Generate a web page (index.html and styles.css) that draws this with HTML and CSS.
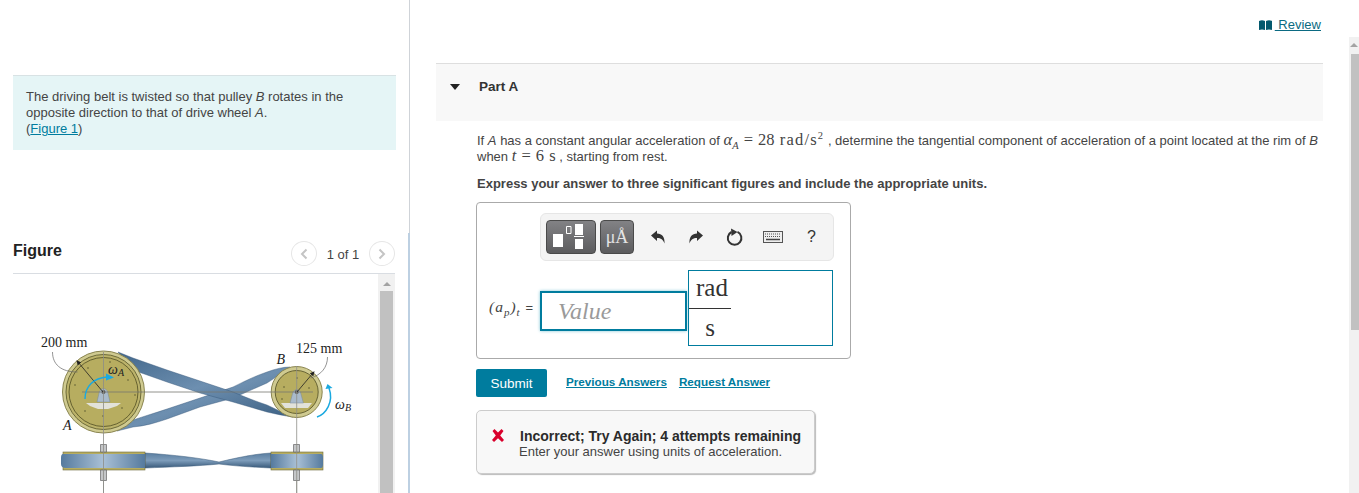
FILE: index.html
```html
<!DOCTYPE html>
<html lang="en">
<head>
<meta charset="utf-8">
<title>Part A</title>
<link rel="stylesheet" href="styles.css">
</head>
<body>
<div class="page">
  <aside class="left">
    <div class="intro">
      <p>The driving belt is twisted so that pulley <i>B</i> rotates in the<br>opposite direction to that of drive wheel <i>A</i>.<br>(<a href="#">Figure 1</a>)</p>
    </div>
    <div class="fig-head">
      <h2>Figure</h2>
      <div class="pager">
        <span class="circle"><svg width="10" height="12" viewBox="0 0 10 12"><path d="M7.500 1.500 3 6l4.500 4.500" fill="none" stroke="#c4c4c4" stroke-width="2"/></svg></span>
        <span class="pager-text">1 of 1</span>
        <span class="circle"><svg width="10" height="12" viewBox="0 0 10 12"><path d="M2.500 1.500 7 6l-4.500 4.500" fill="none" stroke="#c4c4c4" stroke-width="2"/></svg></span>
      </div>
    </div>
    <div class="fig-scroll">
      <svg class="figure" width="365" height="219" viewBox="13 274 365 219">
        <defs>
          <linearGradient id="belt" x1="0" y1="0" x2="0" y2="1"><stop offset="0" stop-color="#5a7ea1"/><stop offset=".5" stop-color="#7d9cba"/><stop offset="1" stop-color="#38597a"/></linearGradient>
          <linearGradient id="beltH" x1="0" y1="0" x2="1" y2="0"><stop offset="0" stop-color="#557a9e"/><stop offset=".5" stop-color="#a9c0d6"/><stop offset="1" stop-color="#557a9e"/></linearGradient>
          <linearGradient id="beltA" x1="0" y1="0" x2="1" y2="1"><stop offset="0" stop-color="#42678b"/><stop offset=".5" stop-color="#6d8fb0"/><stop offset="1" stop-color="#3d6184"/></linearGradient>
          <marker id="tip" markerWidth="6" markerHeight="6" refX="3" refY="3" orient="auto"><path d="M0 0 6 3 0 6z" fill="#222"/></marker>
        </defs>
        <!-- crossing belts -->
        <path d="M117 431C122 427 128 423 133 420C145 416 155 413 167 409L200 398 233 387C245 381 255 376 267 372C275 369 283 367 290 367C283 372 275 378 267 383L233 398 200 407 167 419C155 423 145 426 133 427Z" fill="url(#beltA)" stroke="#2f5273" stroke-width=".4"/>
        <path d="M118 352 133 358 167 370 200 381 233 392C245 397 255 401 267 405C276 409 285 414 293 417C285 416 276 414 267 412L233 402 200 393 167 382 133 370C128 364 123 358 118 352Z" fill="url(#beltA)" stroke="#2f5273" stroke-width=".4"/>
        <!-- pulley A -->
        <circle cx="103.500" cy="392" r="41" fill="#cfca90" stroke="#8a8550"/>
        <circle cx="103.500" cy="392" r="37.500" fill="#bcb36a" stroke="#6d6a38"/>
        <circle cx="103.500" cy="392" r="34.500" fill="#b7ad60" stroke="#4f4c22" stroke-width=".8"/>
        <g fill="#5f5c30">
          <circle cx="75" cy="385" r=".8"/><circle cx="110" cy="362" r=".8"/><circle cx="128" cy="380" r=".8"/><circle cx="135" cy="395" r=".8"/><circle cx="85" cy="411" r=".8"/><circle cx="122" cy="408" r=".8"/><circle cx="103" cy="416" r=".8"/><circle cx="88" cy="368" r=".8"/>
        </g>
        <path d="M86 403H121L117 406 108 409H98L90 406Z" fill="#e2e2da"/>
        <path d="M97 402l2.500-11q4-5 8 0l2.500 11z" fill="#a9bacb" stroke="#7b8a99" stroke-width=".5"/>
        <circle cx="103.500" cy="392" r="2" fill="#555"/>
        <!-- pulley B -->
        <circle cx="296.700" cy="392" r="25.500" fill="#cfca90" stroke="#8a8550"/>
        <circle cx="296.700" cy="392" r="21.500" fill="#b7ad60" stroke="#4f4c22" stroke-width=".8"/>
        <g fill="#5f5c30"><circle cx="284" cy="387" r=".8"/><circle cx="309" cy="388" r=".8"/><circle cx="282" cy="399" r=".8"/><circle cx="297" cy="378" r=".8"/></g>
        <path d="M281 403H312L308 408H285Z" fill="#e2e2da"/>
        <path d="M290 403l3-11q3.700-5 7.400 0l3 11z" fill="#a9bacb" stroke="#7b8a99" stroke-width=".5"/>
        <circle cx="296.700" cy="392" r="2" fill="#555"/>
        <!-- centre lines -->
        <path d="M82 392H313" stroke="#77776f" stroke-width=".8"/>
        <path d="M103.500 352V493M296.700 366V493" stroke="#8d8d88" stroke-width=".8"/>
        <!-- leaders -->
        <path d="M52.500 352c0 12 8 20 25 20" fill="none" stroke="#666" stroke-width=".7"/>
        <path d="M103 392 78 362" stroke="#222" stroke-width=".8" marker-end="url(#tip)"/>
        <path d="M327.500 357c0 10-6 18-17 21" fill="none" stroke="#666" stroke-width=".7"/>
        <path d="M297 392 313 373" stroke="#222" stroke-width=".8" marker-end="url(#tip)"/>
        <!-- side view -->
        <path d="M145 453C175 455 200 458 219 462C240 457 255 454 271 453V468C250 467 235 466 219 464C200 466 170 467 145 468Z" fill="url(#belt)" stroke="#3a5a7a" stroke-width=".5"/>
        <rect x="63" y="452" width="82" height="18" fill="#b7ad60" stroke="#6d6a3c" stroke-width=".6"/>
        <rect x="271" y="452" width="52" height="18" fill="#b7ad60" stroke="#6d6a3c" stroke-width=".6"/>
        <path d="M63 454H145V468H66Q61 468 61 464V458Q61 454 63 454Z" fill="url(#beltH)"/>
        <path d="M271 454H321Q323 454 323 458V464Q323 468 321 468H271Z" fill="url(#beltH)"/>
        <path d="M100.500 444.500h6v7.500h-6zM100.500 470h6v10.500h-6zM293.500 444.500h6v7.500h-6zM293.500 470h6v10.500h-6z" fill="#c4c6c8" stroke="#666" stroke-width=".7"/>
        <path d="M103.500 444V493M296.700 444V493" stroke="#8d8d88" stroke-width=".8"/>
        <!-- rotation arrows -->
        <path d="M85 399C85 386 94 378 107 377" fill="none" stroke="#1aa9e0" stroke-width="1.500"/>
        <path d="M106 373.500 114 377.500 106 380.500z" fill="#1aa9e0"/>
        <path d="M317 417C326 414 334 402 329 388" fill="none" stroke="#1aa9e0" stroke-width="1.500"/>
        <path d="M325.500 389 327.500 384 332.500 388z" fill="#1aa9e0"/>
        <!-- labels -->
        <text class="fig-t" x="41" y="347">200 mm</text>
        <text class="fig-t" x="296" y="353">125 mm</text>
        <text class="fig-t fig-i" x="276.500" y="364">B</text>
        <text class="fig-t fig-i" x="63" y="430">A</text>
        <text class="fig-t fig-i" x="108" y="374">ω<tspan class="fig-sub" dy="2">A</tspan></text>
        <text class="fig-t fig-i" x="335" y="409">ω<tspan class="fig-sub" dy="2">B</tspan></text>
      </svg>
      <div class="v-bar">
        <span class="bar-arrow"></span>
        <span class="bar-thumb"></span>
      </div>
    </div>
  </aside>

  <main class="right">
    <div class="review-row">
      <a class="review" href="#"><svg width="13" height="10" viewBox="0 0 13 10"><path d="M0 1q3-1.500 6 0v9q-3-1-6 0zM7 1q3-1.500 6 0v9q-3-1-6 0z" fill="#04596e"/></svg><span>&nbsp;Review</span></a>
    </div>
    <section class="part-head">
      <span class="tri"></span>
      <h3>Part A</h3>
    </section>
    <div class="body">
      <p class="q">If <i>A</i> has a constant angular acceleration of <span class="m"><i>α<sub>A</sub></i> = 28 <span class="m-unit">rad/s<sup>2</sup></span></span> , determine the tangential component of acceleration of a point located at the rim of <i>B</i><br>when <span class="m"><i>t</i> = 6 s</span> , starting from rest.</p>
      <p class="inst">Express your answer to three significant figures and include the appropriate units.</p>
      <div class="answer">
        <div class="toolbar">
          <button class="tbtn tbtn-wide" type="button" aria-label="Templates"><svg width="48" height="32" viewBox="1 1 48 32"><path d="M7 14h10v13H7zM29 4h8v11h-8zM29 19h8v10h-8z" fill="#fff"/><path d="M28 16.500h10" stroke="#fff"/><path d="M20.500 6.500h4.500v7h-4.500z" fill="none" stroke="#fff"/></svg></button>
          <button class="tbtn tbtn-unit" type="button">μÅ</button>
          <span class="tool"><svg width="16" height="14" viewBox="0 0 16 14"><path d="M1 5.500 7 .500v3C12 3.500 15 7 14.500 13.500 13 9.500 11 8 7 8v3z" fill="#333"/></svg></span>
          <span class="tool"><svg width="16" height="14" viewBox="0 0 16 14"><path d="M15 5.500 9 .500v3C4 3.500 1 7 1.500 13.500 3 9.500 5 8 9 8v3z" fill="#333"/></svg></span>
          <span class="tool"><svg width="18" height="18" viewBox="0 0 18 18"><path d="M11.500 3.900A6.800 6.800 0 1 1 5.500 4" fill="none" stroke="#333" stroke-width="2"/><path d="M5 .500 11.500 4 5.500 8z" fill="#333"/></svg></span>
          <span class="tool"><svg width="20" height="12" viewBox="0 0 20 12"><rect x=".500" y=".500" width="19" height="11" fill="#eee" stroke="#555"/><path d="M2 3h16M2 5.500h16" stroke="#555" stroke-dasharray="1 1"/><path d="M3 8.500h14" stroke="#444" stroke-width="1.500"/></svg></span>
          <span class="tool tool-help">?</span>
        </div>
        <div class="eq">
          <span class="eq-label"><i>(a<sub>p</sub>)<sub>t</sub></i> <span class="eq-sign">=</span></span>
          <input class="value" type="text" placeholder="Value">
          <div class="units">
            <span class="u-top">rad</span>
            <span class="u-bot">s</span>
          </div>
        </div>
      </div>
      <div class="actions">
        <button class="submit" type="button">Submit</button>
        <a href="#">Previous Answers</a>
        <a href="#">Request Answer</a>
      </div>
      <div class="feedback">
        <svg class="x" width="14" height="13" viewBox="0 0 14 13"><path d="M1.500 2 3.500 0 7 3.500 10.500 0 12.500 2 9.200 6.500 13 11 11 13 7 9.300 3 13 1 11 4.800 6.500z" fill="#d9002c"/></svg>
        <div class="fb-text">
          <strong>Incorrect; Try Again; 4 attempts remaining</strong>
          <span>Enter your answer using units of acceleration.</span>
        </div>
      </div>
    </div>
  </main>

  <div class="page-bar">
    <span class="bar-arrow"></span>
    <span class="page-thumb"></span>
  </div>
</div>
</body>
</html>
```

FILE: styles.css
```css
* { box-sizing: border-box; }
html, body { margin: 0; height: 100%; overflow: hidden; background: #fff; }
body { font-family: "Liberation Sans", Arial, sans-serif; font-size: 13px; color: #444; }
a { color: #007c9e; }
p, h2, h3 { margin: 0; }
button { font-family: inherit; }

.page { display: flex; height: 493px; width: 1359px; }

.left { position: relative; width: 410px; flex: none; border-right: 1px solid #cfd3d8; padding: 75px 13px 0; display: flex; flex-direction: column; }
.left::after { content: ""; position: absolute; top: 233px; bottom: 0; right: -1px; width: 2px; background: #bdd0e2; }
.intro { width: 383px; height: 75px; background: #e5f5f6; border-top: 1px solid #d8e2e4; padding: 13px 13px 0; line-height: 16px; }
.fig-head { width: 382px; height: 124px; display: flex; justify-content: space-between; align-items: flex-end; border-bottom: 1px solid #d9dde2; padding-bottom: 7px; }
.fig-head h2 { font-size: 16px; line-height: 20px; font-weight: bold; color: #222; padding-bottom: 5px; }
.pager { display: flex; align-items: center; }
.pager-text { color: #444; width: 52px; text-align: center; padding-top: 2px; }
.circle { width: 26px; height: 25px; border: 1px solid #e6e6e6; border-radius: 50%; display: flex; align-items: center; justify-content: center; }
.fig-scroll { display: flex; width: 382px; flex: 1; min-height: 0; overflow: hidden; }
.figure { display: block; flex: none; }
.fig-t { font-family: "Liberation Serif", serif; font-size: 14px; fill: #222; }
.fig-i { font-style: italic; }
.fig-sub { font-size: 10px; }
.v-bar { width: 17px; background: #f1f1f1; display: flex; flex-direction: column; align-items: center; }
.bar-arrow { width: 0; height: 0; border: 4px solid transparent; border-bottom: 4px solid #a3a3a3; border-top: 0; margin: 8px 0 5px; }
.bar-thumb { width: 13px; flex: 1; background: #c1c1c1; }

.right { flex: 1; min-width: 0; padding-left: 26px; display: flex; flex-direction: column; }
.review-row { width: 885px; height: 63px; display: flex; justify-content: flex-end; padding-top: 17px; }
.review { display: flex; align-items: center; height: 15px; color: #0b6a82; line-height: 15px; text-decoration: none; gap: 3px; }
.review span { text-decoration: underline; }
.part-head { width: 887px; height: 58px; flex: none; background: #f8f8f8; border-top: 1px solid #dedede; display: flex; padding: 15px 0 0 14px; }
.tri { width: 0; height: 0; border: 5.500px solid transparent; border-top: 6px solid #222; border-bottom: 0; margin: 5px 19px 0 0; }
.part-head h3 { font-size: 13.500px; line-height: 16px; font-weight: bold; color: #333; }
.body { padding: 12px 0 0 41px; width: 887px; }
.q { line-height: 16px; white-space: nowrap; }
.m { font-family: "Liberation Serif", serif; font-size: 16.500px; line-height: 0; word-spacing: 1px; }
.m sub { font-size: 10.500px; line-height: 0; }
.m sup { font-size: 10.500px; line-height: 0; }
.m-unit { letter-spacing: 1.200px; }
.inst { margin-top: 11px; line-height: 16px; font-weight: bold; }
.answer { margin: 10px 0 0 -1px; width: 375px; height: 157px; border: 1px solid #aaa; border-radius: 4px; padding: 10px 16px 0 63px; }
.toolbar { width: 294px; height: 48px; background: #f4f4f4; border: 1px solid #e6e6e6; border-radius: 6px; display: flex; align-items: center; padding: 0 0 0 5px; }
.tbtn { height: 34px; border: 1px solid #4a4a4a; border-radius: 4px; background: linear-gradient(#828285, #5c5c5e); color: #e4e4e4; padding: 0; display: flex; align-items: center; justify-content: center; }
.tbtn-wide { width: 50px; }
.tbtn-unit { width: 34px; margin-left: 4px; font-family: "Liberation Serif", serif; font-size: 18px; }
.tool { width: 38.300px; display: flex; justify-content: center; align-items: center; }
.tool:nth-of-type(1) { margin-left: 5px; }
.tool-help { font-size: 16px; color: #333; }
.eq { display: flex; align-items: flex-start; margin: 9px 0 0 -52px; }
.eq-label { width: 52px; padding: 28px 0 0 1px; font-family: "Liberation Serif", serif; font-size: 15.500px; letter-spacing: 1px; color: #444; white-space: nowrap; }
.eq-label sub { font-size: 11px; line-height: 0; }
.eq-sign { font-family: "Liberation Sans", sans-serif; font-size: 13px; letter-spacing: 0; }
.value { width: 147px; height: 40px; margin: 21px 0 0 0; border: 2px solid #007c9e; box-shadow: 0 0 3px #7fc4d6; padding: 0 16px; font-family: "Liberation Serif", serif; font-style: italic; font-size: 24px; color: #999; outline: 0; }
.value::placeholder { color: #9a9a9a; opacity: 1; }
.units { width: 145px; height: 76px; margin-left: 1px; border: 1px solid #007c9e; font-family: "Liberation Serif", serif; font-size: 25px; color: #333; display: flex; flex-direction: column; align-items: flex-start; }
.u-top { flex: none; height: 37px; border-bottom: 1px solid #333; padding-left: 7px; line-height: 34px; white-space: nowrap; box-sizing: content-box; width: 35px; }
.u-bot { flex: none; width: 42px; height: 37px; text-align: center; line-height: 37px; }
.actions { display: flex; align-items: center; margin: 10px 0 0 -1px; height: 28px; }
.actions a { font-weight: bold; font-size: 11.700px; margin-left: 12px; position: relative; top: -2px; }
.actions a:first-of-type { margin-left: 19px; }
.submit { width: 71px; height: 28px; border: 0; border-radius: 2px; background: #007c9e; color: #fff; font-size: 13.500px; padding: 0; }
.feedback { margin: 13px 0 0 -1px; width: 339px; height: 64px; background: #f8f8f8; border: 1px solid #ccc; border-radius: 5px; box-shadow: 1px 1px 1px #bbb; display: flex; padding: 17px 0 0 14px; }
.x { flex: none; margin: 1px 15px 0 0; }
.fb-text { display: flex; flex-direction: column; line-height: 16px; }
.fb-text strong { font-size: 14px; color: #2b2b2b; line-height: 16px; }
.fb-text span { margin-left: -1px; }

.page-bar { width: 10px; flex: none; margin: 37px 0 0 auto; background: #f1f1f1; display: flex; flex-direction: column; align-items: flex-end; }
.page-thumb { width: 8px; height: 276px; background: #c1c1c1; }
.page-bar .bar-arrow { margin: 6px 0 7px 0; align-self: center; }
```
